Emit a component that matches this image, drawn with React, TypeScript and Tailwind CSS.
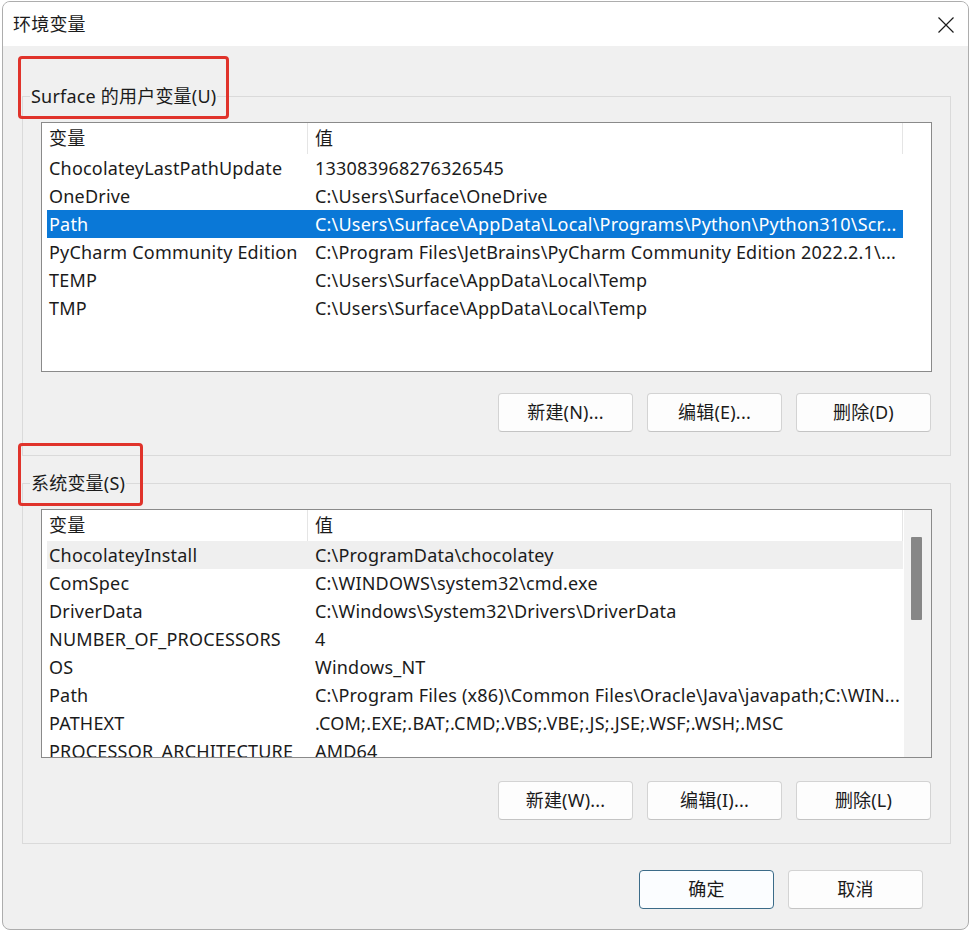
import * as React from "react"

type Row = { name: string; value: string }

const userVars: Row[] = [
  { name: "ChocolateyLastPathUpdate", value: "133083968276326545" },
  { name: "OneDrive", value: "C:\\Users\\Surface\\OneDrive" },
  { name: "Path", value: "C:\\Users\\Surface\\AppData\\Local\\Programs\\Python\\Python310\\Scr..." },
  { name: "PyCharm Community Edition", value: "C:\\Program Files\\JetBrains\\PyCharm Community Edition 2022.2.1\\..." },
  { name: "TEMP", value: "C:\\Users\\Surface\\AppData\\Local\\Temp" },
  { name: "TMP", value: "C:\\Users\\Surface\\AppData\\Local\\Temp" },
]

const systemVars: Row[] = [
  { name: "ChocolateyInstall", value: "C:\\ProgramData\\chocolatey" },
  { name: "ComSpec", value: "C:\\WINDOWS\\system32\\cmd.exe" },
  { name: "DriverData", value: "C:\\Windows\\System32\\Drivers\\DriverData" },
  { name: "NUMBER_OF_PROCESSORS", value: "4" },
  { name: "OS", value: "Windows_NT" },
  { name: "Path", value: "C:\\Program Files (x86)\\Common Files\\Oracle\\Java\\javapath;C:\\WIN..." },
  { name: "PATHEXT", value: ".COM;.EXE;.BAT;.CMD;.VBS;.VBE;.JS;.JSE;.WSF;.WSH;.MSC" },
  { name: "PROCESSOR_ARCHITECTURE", value: "AMD64" },
]

function ListRow({ row, state }: { row: Row; state?: "selected" | "hover" }) {
  const bg =
    state === "selected"
      ? "bg-[#0a78d7] text-white"
      : state === "hover"
        ? "bg-[#efefef]"
        : ""
  return (
    <div className={`flex h-[28px] shrink-0 items-center ml-[5px] w-[856px] whitespace-nowrap ${bg}`}>
      <div className="w-[261px] shrink-0 pl-[2px] overflow-hidden">{row.name}</div>
      <div className="flex-1 pl-[7px] overflow-hidden">{row.value}</div>
    </div>
  )
}

function VarList({
  rows,
  selected,
  hover,
  scroll,
  height,
}: {
  rows: Row[]
  selected?: number
  hover?: number
  scroll?: boolean
  height: string
}) {
  return (
    <div className={`mx-[18px] flex border border-[#8a8a8a] bg-white ${height}`}>
      <div className="flex min-w-0 flex-1 flex-col overflow-hidden">
        <div className="flex h-[31px] shrink-0 items-center">
          <div className="flex h-full w-[266px] items-center border-r border-[#e5e5e5] pl-[7px]">变量</div>
          <div className="flex h-full w-[595px] items-center border-r border-[#e5e5e5] pl-[7px]">值</div>
        </div>
        {rows.map((r, i) => (
          <ListRow
            key={r.name + i}
            row={r}
            state={i === selected ? "selected" : i === hover ? "hover" : undefined}
          />
        ))}
      </div>
      {scroll && (
        <div className="w-[27px] shrink-0 bg-[#f2f2f2] pt-[27px] pl-[7px]">
          <div className="h-[83px] w-[11px] rounded-[1px] bg-[#878787]" />
        </div>
      )}
    </div>
  )
}

function Btn({ children, primary }: { children: React.ReactNode; primary?: boolean }) {
  return (
    <button
      type="button"
      className={
        primary
          ? "flex h-[39px] w-[135px] items-center justify-center rounded-[4px] border border-[#3b6b88] bg-[#fbfdff]"
          : "flex h-[39px] w-[135px] items-center justify-center rounded-[4px] border border-[#d3d3d3] border-b-[#c4c4c4] bg-[#fdfdfd]"
      }
    >
      {children}
    </button>
  )
}

function Group({
  label,
  markWidth,
  children,
}: {
  label: string
  markWidth: string
  children: React.ReactNode
}) {
  return (
    <fieldset className="border border-[#dadada] pb-[23px]">
      <legend className="relative ml-[7px] px-[1px] leading-[24px]">
        {label}
        {/* red annotation box drawn over the screenshot */}
        <span
          className={`pointer-events-none absolute -left-[12px] -top-[28px] h-[63px] rounded-[4px] border-[3.5px] border-[#e0332b] ${markWidth}`}
        />
      </legend>
      {children}
    </fieldset>
  )
}

export default function App() {
  return (
    <div className="h-[932px] w-[971px] overflow-hidden bg-white pl-[2px] pt-[1px] font-['Noto_Sans','Noto_Sans_CJK_SC',sans-serif] text-[18px] tracking-[0.2px] text-[#1b1b1b]">
      <div className="flex h-[929px] w-[967px] flex-col overflow-hidden rounded-[8px] border border-[#adadad] bg-[#f0f0f0]">
        {/* title bar */}
        <div className="flex h-[44px] shrink-0 items-center justify-between bg-white pl-[10px] pr-[14px]">
          <span className="text-[18px]">环境变量</span>
          <svg width="16" height="16" viewBox="0 0 16 16" className="mt-[2px]">
            <path d="M0.5 0.5 L15.5 15.5 M15.5 0.5 L0.5 15.5" stroke="#1b1b1b" strokeWidth="1.2" fill="none" />
          </svg>
        </div>

        <div className="flex flex-col pl-[19px] pr-[17px] pt-[38px]">
          <Group label="Surface 的用户变量(U)" markWidth="w-[211px]">
            <div className="mt-[14px]">
              <VarList rows={userVars} selected={2} height="h-[250px]" />
            </div>
            <div className="mt-[21px] flex justify-end gap-[14px] pr-[19px]">
              <Btn>新建(N)...</Btn>
              <Btn>编辑(E)...</Btn>
              <Btn>删除(D)</Btn>
            </div>
          </Group>

          <div className="mt-[15px]">
            <Group label="系统变量(S)" markWidth="w-[125px]">
              <div className="mt-[14px]">
                <VarList rows={systemVars} hover={0} scroll height="h-[249px]" />
              </div>
              <div className="mt-[23px] flex justify-end gap-[14px] pr-[19px]">
                <Btn>新建(W)...</Btn>
                <Btn>编辑(I)...</Btn>
                <Btn>删除(L)</Btn>
              </div>
            </Group>
          </div>

          <div className="mt-[26px] flex justify-end gap-[14px] pr-[28px]">
            <Btn primary>确定</Btn>
            <Btn>取消</Btn>
          </div>
        </div>
      </div>
    </div>
  )
}
